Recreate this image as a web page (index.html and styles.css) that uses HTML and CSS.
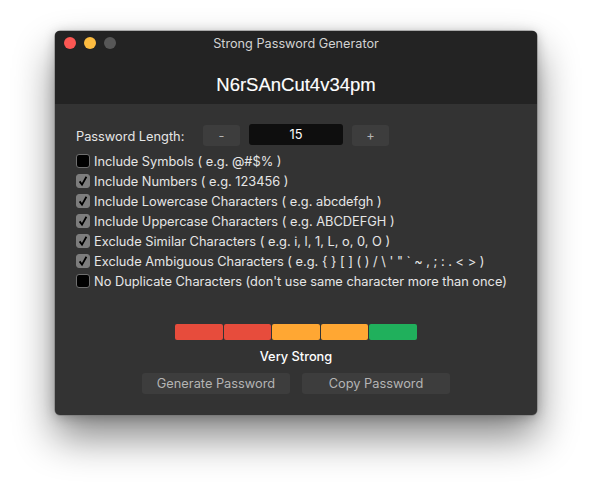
FILE: index.html
```html
<!DOCTYPE html>
<html lang="en">
<head>
<meta charset="utf-8">
<title>Strong Password Generator</title>
<link rel="stylesheet" href="styles.css">
</head>
<body>
<main class="window">
  <header class="header">
    <div class="titlebar">
      <span class="light red"></span>
      <span class="light yellow"></span>
      <span class="light gray"></span>
      <span class="title">Strong Password Generator</span>
    </div>
    <div class="password">N6rSAnCut4v34pm</div>
  </header>
  <section class="content">
    <div class="length-row">
      <span class="length-label">Password Length:</span>
      <span class="btn step">-</span>
      <span class="length-value">15</span>
      <span class="btn step">+</span>
    </div>
    <ul class="options">
      <li class="option"><span class="box"></span>Include Symbols ( e.g. @#$% )</li>
      <li class="option"><span class="box on"><svg viewBox="0 0 14 14"><path d="M3.6 7.4 6 10.6 10.4 2.8"/></svg></span>Include Numbers ( e.g. 123456 )</li>
      <li class="option"><span class="box on"><svg viewBox="0 0 14 14"><path d="M3.6 7.4 6 10.6 10.4 2.8"/></svg></span>Include Lowercase Characters ( e.g. abcdefgh )</li>
      <li class="option"><span class="box on"><svg viewBox="0 0 14 14"><path d="M3.6 7.4 6 10.6 10.4 2.8"/></svg></span>Include Uppercase Characters ( e.g. ABCDEFGH )</li>
      <li class="option"><span class="box on"><svg viewBox="0 0 14 14"><path d="M3.6 7.4 6 10.6 10.4 2.8"/></svg></span>Exclude Similar Characters ( e.g. i, l, 1, L, o, 0, O )</li>
      <li class="option"><span class="box on"><svg viewBox="0 0 14 14"><path d="M3.6 7.4 6 10.6 10.4 2.8"/></svg></span>Exclude Ambiguous Characters ( e.g. { } [ ] ( ) / \ ' " ` ~ , ; : . &lt; &gt; )</li>
      <li class="option"><span class="box"></span>No Duplicate Characters (don't use same character more than once)</li>
    </ul>
    <div class="meter">
      <span class="seg seg-red"></span>
      <span class="seg seg-red"></span>
      <span class="seg seg-orange"></span>
      <span class="seg seg-orange"></span>
      <span class="seg seg-green"></span>
    </div>
    <div class="strength">Very Strong</div>
    <div class="actions">
      <span class="btn action">Generate Password</span>
      <span class="btn action">Copy Password</span>
    </div>
  </section>
</main>
</body>
</html>
```
FILE: styles.css
```css
* { box-sizing: border-box; }
html, body { margin: 0; height: 100%; background: #fff; overflow: hidden; }
body {
  padding: 31px 55px 0;
  font-family: Inter, "Liberation Sans", sans-serif;
  font-size: 12.8px;
  color: #e6e6e6;
}
.window {
  width: 482px;
  height: 384px;
  border-radius: 5px;
  background: #333;
  overflow: hidden;
  box-shadow: 0 0 0 0.5px #777, 0 22px 40px rgba(0,0,0,0.48), 0 2px 12px rgba(0,0,0,0.25);
  display: flex;
  flex-direction: column;
}
.header { height: 73px; background: #232323; flex: none; }
.titlebar { position: relative; height: 24px; display: flex; align-items: center; padding-left: 9px; gap: 8px; }
.light { width: 12px; height: 12px; border-radius: 50%; }
.red { background: #fc5753; }
.yellow { background: #fdbc40; }
.gray { background: #575757; }
.title {
  position: absolute; left: 0; right: 0; top: 0; line-height: 25px;
  text-align: center; font-size: 12.7px; color: #d2d2d2;
}
.password {
  text-align: center;
  font-family: "Liberation Sans", sans-serif;
  font-size: 18.5px;
  line-height: 22px;
  margin-top: 19px;
  color: #fff;
  -webkit-text-stroke: 0.15px #fff;
}
.content { flex: 1; padding: 20px 21px 0; display: flex; flex-direction: column; }
.length-row { display: flex; align-items: flex-start; height: 22px; }
.length-label { width: 127px; line-height: 25px; }
.btn {
  display: flex; align-items: center; justify-content: center;
  background: #3d3d3d; border-radius: 3px; color: #b4b4b4;
}
.step { width: 37px; height: 21px; margin-top: 1px; }
.length-value {
  width: 94px; height: 21px; margin: 0 9px;
  background: #0e0e0e; border-radius: 3px; color: #fff;
  display: flex; align-items: center; justify-content: center;
}
.options { list-style: none; margin: 5px 0 0; padding: 0; display: flex; flex-direction: column; }
.option { display: flex; align-items: center; height: 20px; white-space: nowrap; }
.box {
  width: 14px; height: 14px; margin-right: 4px; flex: none;
  border-radius: 3px; background: #000; border: 1px solid #6e6e6e;
}
.box.on { background: #7d7d7d; border-color: #7d7d7d; }
.box svg { display: block; width: 14px; height: 14px; margin: -1px; fill: none; stroke: #000; stroke-width: 1.8; }
.meter { display: flex; justify-content: center; gap: 1px; margin-top: 33px; }
.seg { width: 47.6px; height: 16px; border-radius: 2px; }
.seg-red { background: #e74c3c; }
.seg-orange { background: #ffa733; }
.seg-green { background: #20b05c; }
.strength { text-align: center; margin-top: 8px; line-height: 18px; color: #fff; font-weight: 500; }
.actions { display: flex; justify-content: center; gap: 12px; margin-top: 7px; }
.action { width: 148px; height: 21px; }
```
